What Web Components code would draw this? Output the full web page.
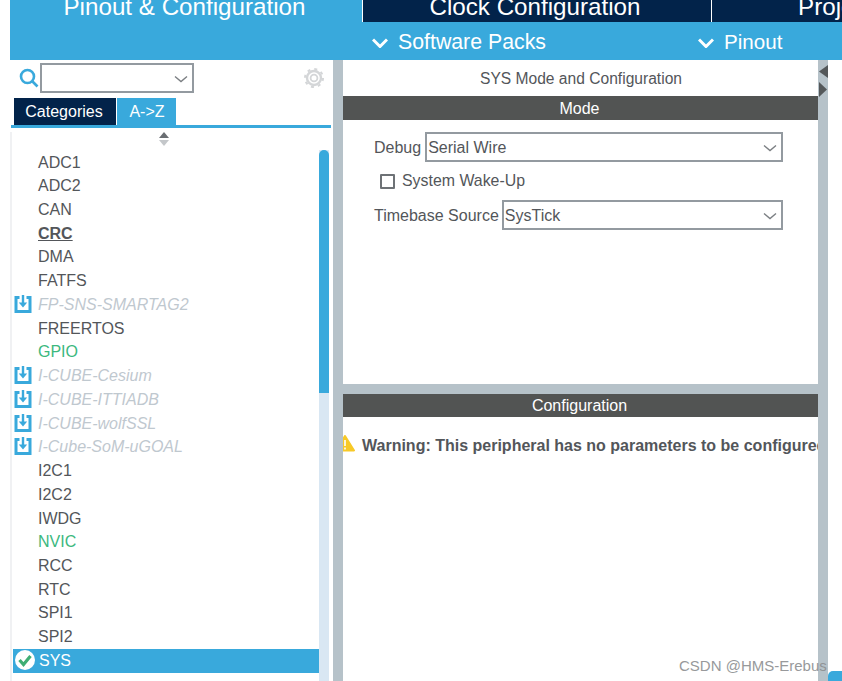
<!DOCTYPE html>
<html lang="en">
<head>
<meta charset="utf-8">
<title>SYS Mode and Configuration</title>
<style>
  html, body { margin: 0; padding: 0; background: #fff; }
  body { font-family: "Liberation Sans", Arial, sans-serif; color: #53565a; }
</style>
</head>
<body>
<cube-app></cube-app>
<script>
/** Shared chevron used by the dropdowns and the sub bar. */
const chevron = (w, h, stroke, sw) => `
  <svg width="${w}" height="${h}" viewBox="0 0 ${w} ${h}" aria-hidden="true">
    <path d="M1 1.5 L${w / 2} ${h - 1.5} L${w - 1} 1.5" fill="none" stroke="${stroke}" stroke-width="${sw}"/>
  </svg>`;

class CubeTabs extends HTMLElement {
  shadowRoot_ = this.attachShadow({ mode: 'open' });
  constructor () {
    super();
    this.shadowRoot_.innerHTML = `
      <style>
        :host { display: grid; grid-template-columns: 352px 349px 1fr; height: 22px; overflow: hidden; color: #fff; font-size: 24.2px; }
        div { display: flex; justify-content: center; align-items: flex-end; height: 22px; line-height: 28px; white-space: nowrap; overflow: hidden; }
        div span { display: block; margin-bottom: 1px; }
        .first { padding-right: 3px; }
        .dark { background: #02234a; border-left: 1px solid #fff; padding-right: 4px; }
        .last { justify-content: flex-start; padding: 0 0 0 86px; }
      </style>
      <div class="first"><span>Pinout &amp; Configuration</span></div>
      <div class="dark"><span>Clock Configuration</span></div>
      <div class="dark last"><span>Project Manager</span></div>`;
  }
}

class CubeSubbar extends HTMLElement {
  shadowRoot_ = this.attachShadow({ mode: 'open' });
  constructor () {
    super();
    this.shadowRoot_.innerHTML = `
      <style>
        :host { display: grid; grid-template-columns: 326px 1fr; height: 38px; padding-left: 362px; box-sizing: border-box; color: #fff; font-size: 21.3px; }
        div { display: flex; align-items: center; gap: 10px; padding: 3px 0 0 10px; box-sizing: border-box; }
        .small { font-size: 20.6px; }
        .small span { margin-top: -2px; }
      </style>
      <div>${chevron(16, 10, '#fff', 3)}<span>Software Packs</span></div>
      <div class="small">${chevron(16, 10, '#fff', 3)}<span>Pinout</span></div>`;
  }
}

class CubeHeader extends HTMLElement {
  shadowRoot_ = this.attachShadow({ mode: 'open' });
  constructor () {
    super();
    this.shadowRoot_.innerHTML = `
      <style>
        :host { display: block; height: 60px; margin-left: 10px; background: #39a9dc; overflow: hidden; }
        cube-subbar { margin-left: -10px; }
      </style>
      <cube-tabs></cube-tabs>
      <cube-subbar></cube-subbar>`;
  }
}

/** Bordered dropdown box; the value goes in the slot. */
class CubeSelect extends HTMLElement {
  shadowRoot_ = this.attachShadow({ mode: 'open' });
  constructor () {
    super();
    this.shadowRoot_.innerHTML = `
      <style>
        :host { display: flex; align-items: center; justify-content: space-between; box-sizing: border-box; height: 30px; border: 2px solid #939aa0; padding: 1px 4px 0 1px; background: #fff; font-size: 16px; color: #53565a; }
        svg { display: block; }
      </style>
      <span><slot></slot></span>
      ${chevron(14, 8, '#7b7f83', 1.4)}`;
  }
}

/** One row of the peripheral list. kind: plain | bold | green | pack | selected */
class CubeItem extends HTMLElement {
  shadowRoot_ = this.attachShadow({ mode: 'open' });
  constructor () {
    super();
    const kind = this.getAttribute('kind') || 'plain';
    const pack = `
      <svg class="icon" width="18" height="20" viewBox="0 0 18 20" aria-hidden="true">
        <path d="M5.5 3.5 H2 V17.5 H16 V3.5 H12.5" fill="none" stroke="#39a9dc" stroke-width="3"/>
        <path d="M9 1 V10" stroke="#39a9dc" stroke-width="2.4"/>
        <path d="M4.8 8.5 H13.2 L9 13.5 Z" fill="#39a9dc"/>
      </svg>`;
    const check = `
      <svg class="icon" width="20" height="20" viewBox="0 0 20 20" aria-hidden="true">
        <circle cx="10" cy="10" r="10" fill="#fff"/>
        <path d="M4.5 10 L8.5 14.5 L15.5 6" fill="none" stroke="#3fae74" stroke-width="3.2"/>
      </svg>`;
    this.shadowRoot_.innerHTML = `
      <style>
        :host { display: block; height: 23.74px; font-size: 16px; line-height: 23.74px; position: relative; white-space: nowrap; color: #53565a; padding-left: 25px; }
        :host([kind=bold]) { font-weight: bold; text-decoration: underline; }
        :host([kind=green]) { color: #3cb87e; }
        :host([kind=pack]) { color: #bfc8cf; font-style: italic; }
        :host([kind=selected]) { background: #39a9dc; color: #fff; padding-left: 26px; }
        .icon { position: absolute; left: 1px; top: 1px; }
        :host([kind=selected]) .icon { left: 2px; top: 1px; }
      </style>
      ${kind === 'pack' ? pack : ''}${kind === 'selected' ? check : ''}<slot></slot>`;
  }
}

class CubeSidebar extends HTMLElement {
  shadowRoot_ = this.attachShadow({ mode: 'open' });
  constructor () {
    super();
    const rows = [
      ['ADC1'], ['ADC2'], ['CAN'], ['CRC', 'bold'], ['DMA'], ['FATFS'],
      ['FP-SNS-SMARTAG2', 'pack'], ['FREERTOS'], ['GPIO', 'green'],
      ['I-CUBE-Cesium', 'pack'], ['I-CUBE-ITTIADB', 'pack'], ['I-CUBE-wolfSSL', 'pack'], ['I-Cube-SoM-uGOAL', 'pack'],
      ['I2C1'], ['I2C2'], ['IWDG'], ['NVIC', 'green'], ['RCC'], ['RTC'], ['SPI1'], ['SPI2'], ['SYS', 'selected']
    ];
    this.shadowRoot_.innerHTML = `
      <style>
        :host { display: block; background: #fff; overflow: hidden; position: relative; }
        .search { display: flex; align-items: center; height: 32px; margin-top: 2px; padding-left: 9px; }
        .search cube-select { width: 154px; margin-left: 1px; }
        .gear { margin-left: 110px; }
        .tabs { display: flex; gap: 1px; height: 27px; margin: 4px 0 0 4px; font-size: 16px; color: #fff; }
        .tabs div { display: flex; align-items: center; justify-content: center; padding-top: 1px; box-sizing: border-box; }
        .cat { width: 102px; background: #02234a; padding-right: 2px; }
        .az { width: 59px; background: #39a9dc; padding-left: 1px; }
        .rule { height: 3px; margin-left: 1px; width: 320px; background: #39a9dc; }
        .list { box-sizing: border-box; width: 319px; height: 553px; margin-left: 0; border: solid #f0f1f3; border-width: 0 0 4px 2px; position: relative; }
        .sort { display: block; margin: 4px 0 0 146px; }
        .rows { margin-top: 4.5px; width: 306px; margin-left: 1px; }
        .track { position: absolute; top: 18px; right: 0; width: 10px; bottom: 0; background: #d9e7f3; }
        .thumb { height: 243px; background: #39a9dc; border-radius: 5px 5px 0 0; }
      </style>
      <div class="search">
        <svg width="20" height="20" viewBox="0 0 20 20" aria-hidden="true">
          <circle cx="8.5" cy="8.5" r="6.5" fill="none" stroke="#39a9dc" stroke-width="2.6"/>
          <path d="M13 13 L18.5 18.5" stroke="#39a9dc" stroke-width="2.6"/>
        </svg>
        <cube-select></cube-select>
        <svg class="gear" width="20" height="20" viewBox="0 0 20 20" aria-hidden="true">
          <circle cx="10" cy="10" r="7" fill="none" stroke="#d4d6d8" stroke-width="2.4"/>
          <circle cx="10" cy="10" r="3.4" fill="none" stroke="#d4d6d8" stroke-width="1.8"/>
          <circle cx="10" cy="10" r="9" fill="none" stroke="#d4d6d8" stroke-width="2" stroke-dasharray="3 4.07"/>
        </svg>
      </div>
      <div class="tabs"><div class="cat">Categories</div><div class="az">A-&gt;Z</div></div>
      <div class="rule"></div>
      <div class="list">
        <svg class="sort" width="12" height="14" viewBox="0 0 12 14" aria-hidden="true">
          <path d="M6 0 L11 6 H1 Z" fill="#6a6e72"/><path d="M1 8 H11 L6 14 Z" fill="#c4c7ca"/>
        </svg>
        <div class="rows">
          ${rows.map(([name, kind]) => `<cube-item${kind ? ` kind="${kind}"` : ''}>${name}</cube-item>`).join('')}
        </div>
        <div class="track"><div class="thumb"></div></div>
      </div>`;
  }
}

/** Dark centred heading bar for a panel section. */
class CubeBar extends HTMLElement {
  shadowRoot_ = this.attachShadow({ mode: 'open' });
  constructor () {
    super();
    this.shadowRoot_.innerHTML = `
      <style>
        :host { display: flex; align-items: center; justify-content: center; box-sizing: border-box; height: 24px; padding: 1px 2px 0 0; background: #525453; color: #fff; font-size: 16px; }
      </style>
      <slot></slot>`;
  }
}

class CubeModePanel extends HTMLElement {
  shadowRoot_ = this.attachShadow({ mode: 'open' });
  constructor () {
    super();
    this.shadowRoot_.innerHTML = `
      <style>
        :host { display: block; background: #fff; font-size: 16px; color: #53565a; height: 324px; overflow: hidden; }
        h2 { margin: 0; height: 36px; font: inherit; font-size: 15.6px; display: flex; align-items: center; justify-content: center; box-sizing: border-box; padding: 2px 0 0 1px; }
        .form { padding: 12px 36px 0 31px; display: flex; flex-direction: column; }
        .row { display: flex; align-items: center; gap: 4px; }
        .row span { padding-top: 1px; }
        .row.base { gap: 3px; }
        .wake { display: flex; align-items: center; gap: 7px; height: 39px; margin-bottom: -1px; padding-left: 6px; }
        .wake span:last-child { margin-top: -2px; font-size: 15.9px; }
        .box { width: 15px; height: 15px; box-sizing: border-box; border: 2px solid #6e7276; border-radius: 1px; }
        cube-select { flex: 1; margin-right: -1px; }
      </style>
      <h2>SYS Mode and Configuration</h2>
      <cube-bar>Mode</cube-bar>
      <div class="form">
        <div class="row"><span>Debug</span><cube-select>Serial Wire</cube-select></div>
        <div class="wake"><span class="box"></span><span>System Wake-Up</span></div>
        <div class="row base"><span>Timebase Source</span><cube-select>SysTick</cube-select></div>
      </div>`;
  }
}

class CubeConfigPanel extends HTMLElement {
  shadowRoot_ = this.attachShadow({ mode: 'open' });
  constructor () {
    super();
    this.shadowRoot_.innerHTML = `
      <style>
        :host { display: block; background: #fff; overflow: hidden; font-size: 16px; color: #53565a; }
        cube-bar { height: 23px; }
        .warn { display: flex; align-items: flex-start; gap: 7px; margin: 18px 0 0 -8px; font-weight: bold; white-space: nowrap; }
        .warn span { margin-top: 1px; line-height: 19px; }
        svg { flex: none; }
      </style>
      <cube-bar>Configuration</cube-bar>
      <div class="warn">
        <svg width="20" height="17" viewBox="0 0 20 17" aria-hidden="true">
          <path d="M10 1 L19 15.5 H1 Z" fill="#f7c928" stroke="#f7c928" stroke-width="2" stroke-linejoin="round"/>
          <path d="M10 5 V11 M10 12.5 V14.5" stroke="#fff" stroke-width="1.6"/>
        </svg>
        <span>Warning: This peripheral has no parameters to be configured</span>
      </div>`;
  }
}

class CubeSplitter extends HTMLElement {
  shadowRoot_ = this.attachShadow({ mode: 'open' });
  constructor () {
    super();
    this.shadowRoot_.innerHTML = `
      <style>
        :host { display: block; background: #b6c2c9; padding: 5px 0 0 1px; }
        svg { display: block; }
      </style>
      <svg width="9" height="33" viewBox="0 0 9 33" aria-hidden="true">
        <path d="M9 0 V13 L0 6.5 Z" fill="#54585a"/>
        <path d="M0 17 L8 24.5 L0 32 Z" fill="#54585a"/>
      </svg>`;
  }
}

class CubeApp extends HTMLElement {
  shadowRoot_ = this.attachShadow({ mode: 'open' });
  constructor () {
    super();
    this.shadowRoot_.innerHTML = `
      <style>
        :host { display: block; width: 842px; height: 681px; overflow: hidden; position: relative; }
        .body { display: grid; grid-template-columns: 323px 10px 475px 10px 24px; height: 621px; margin-left: 10px; }
        .gutter { background: #b6c2c9; }
        .centre { display: flex; flex-direction: column; gap: 10px; background: #b6c2c9; min-width: 0; }
        cube-config-panel { flex: 1; }
        .mark { position: absolute; left: 679px; top: 657px; font-size: 15px; color: #8d8f91; white-space: nowrap; opacity: .9; }
        .blob { position: absolute; left: 828px; top: 671px; width: 24px; height: 12px; background: #39a9dc; border-radius: 5px 0 0 0; }
      </style>
      <cube-header></cube-header>
      <div class="body">
        <cube-sidebar></cube-sidebar>
        <div class="gutter"></div>
        <div class="centre"><cube-mode-panel></cube-mode-panel><cube-config-panel></cube-config-panel></div>
        <cube-splitter></cube-splitter>
        <div></div>
      </div>
      <div class="blob"></div>
      <div class="mark">CSDN @HMS-Erebus</div>`;
  }
}

customElements.define('cube-tabs', CubeTabs);
customElements.define('cube-subbar', CubeSubbar);
customElements.define('cube-header', CubeHeader);
customElements.define('cube-select', CubeSelect);
customElements.define('cube-item', CubeItem);
customElements.define('cube-sidebar', CubeSidebar);
customElements.define('cube-bar', CubeBar);
customElements.define('cube-mode-panel', CubeModePanel);
customElements.define('cube-config-panel', CubeConfigPanel);
customElements.define('cube-splitter', CubeSplitter);
customElements.define('cube-app', CubeApp);
</script>
</body>
</html>
